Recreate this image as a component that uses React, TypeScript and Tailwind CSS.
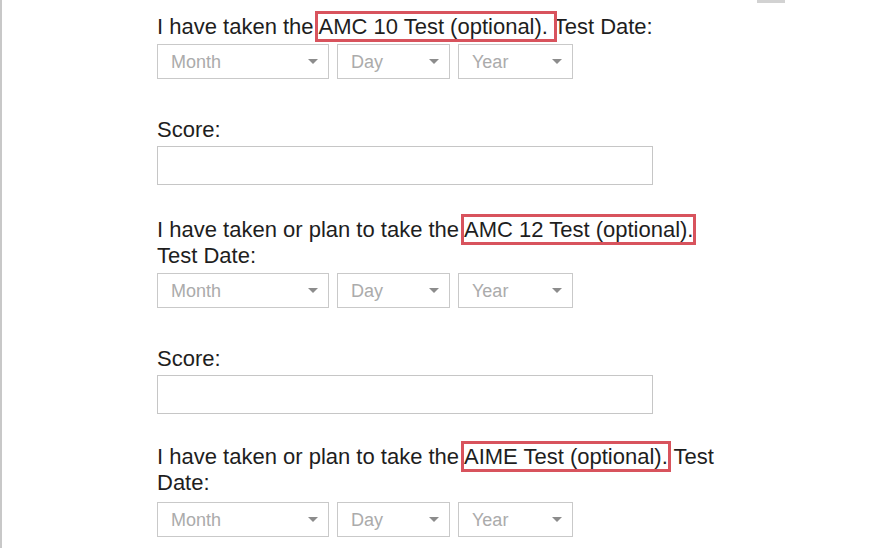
import React from 'react';

const FONT = { fontFamily: '"Liberation Sans", Arial, Helvetica, sans-serif' };

interface DateSelectProps {
  label: string;
  width: string;
}

const Arrow: React.FC = () => (
  <svg width="10" height="5" viewBox="0 0 10 5" className="shrink-0">
    <polygon points="0,0 10,0 5,5" fill="#8c8c8c" />
  </svg>
);

const DateSelect: React.FC<DateSelectProps> = ({ label, width }) => (
  <div
    className={`${width} h-[35px] border border-[#c9c9c9] bg-white flex items-center justify-between pl-[13px] pr-[10px]`}
  >
    <span className="text-[18px] leading-none text-[#ababab]">{label}</span>
    <Arrow />
  </div>
);

interface TestBlockProps {
  className?: string;
  selectsClass?: string;
  showScore?: boolean;
  children: React.ReactNode;
}

const TestBlock: React.FC<TestBlockProps> = ({
  className = '',
  selectsClass = 'mt-1',
  showScore = true,
  children,
}) => (
  <section className={className}>
    <p className="text-[22px] leading-[26px] text-[#1e1e1e]">{children}</p>

    {/* Test date pickers */}
    <div className={`${selectsClass} flex gap-2`}>
      <DateSelect label="Month" width="w-[172px]" />
      <DateSelect label="Day" width="w-[113px]" />
      <DateSelect label="Year" width="w-[115px]" />
    </div>

    {showScore && (
      <>
        <p className="mt-[38px] text-[22px] leading-[26px] text-[#1e1e1e]">Score:</p>
        <div className="mt-[3px] h-[39px] w-[496px] border border-[#c6c6c6] bg-white" />
      </>
    )}
  </section>
);

const Mark: React.FC<{ children: React.ReactNode }> = ({ children }) => (
  <span className="outline-3 outline-solid outline-[#d8535d]">{children}</span>
);

export default function App() {
  return (
    <div
      className="relative min-h-screen w-full bg-white border-l-2 border-[#c8c8c8] overflow-hidden"
      style={FONT}
    >
      {/* fragment of a control cut off at the top edge */}
      <div className="absolute left-[755px] top-0 h-[3px] w-[28px] bg-[#d2d2d2]" />

      <div className="ml-[155px] w-[575px] pt-[14px]">
        <TestBlock>
          {'I have taken the '}
          <Mark>{'AMC 10 Test (optional). '}</Mark>
          {'Test Date:'}
        </TestBlock>

        <TestBlock className="mt-8">
          {'I have taken or plan to take the '}
          <Mark>{'AMC 12 Test (optional).'}</Mark>
          {' Test Date:'}
        </TestBlock>

        <TestBlock className="mt-[30px]" selectsClass="mt-[6px]" showScore={false}>
          {'I have taken or plan to take the '}
          <Mark>{'AIME Test (optional).'}</Mark>
          {' Test Date:'}
        </TestBlock>
      </div>
    </div>
  );
}
